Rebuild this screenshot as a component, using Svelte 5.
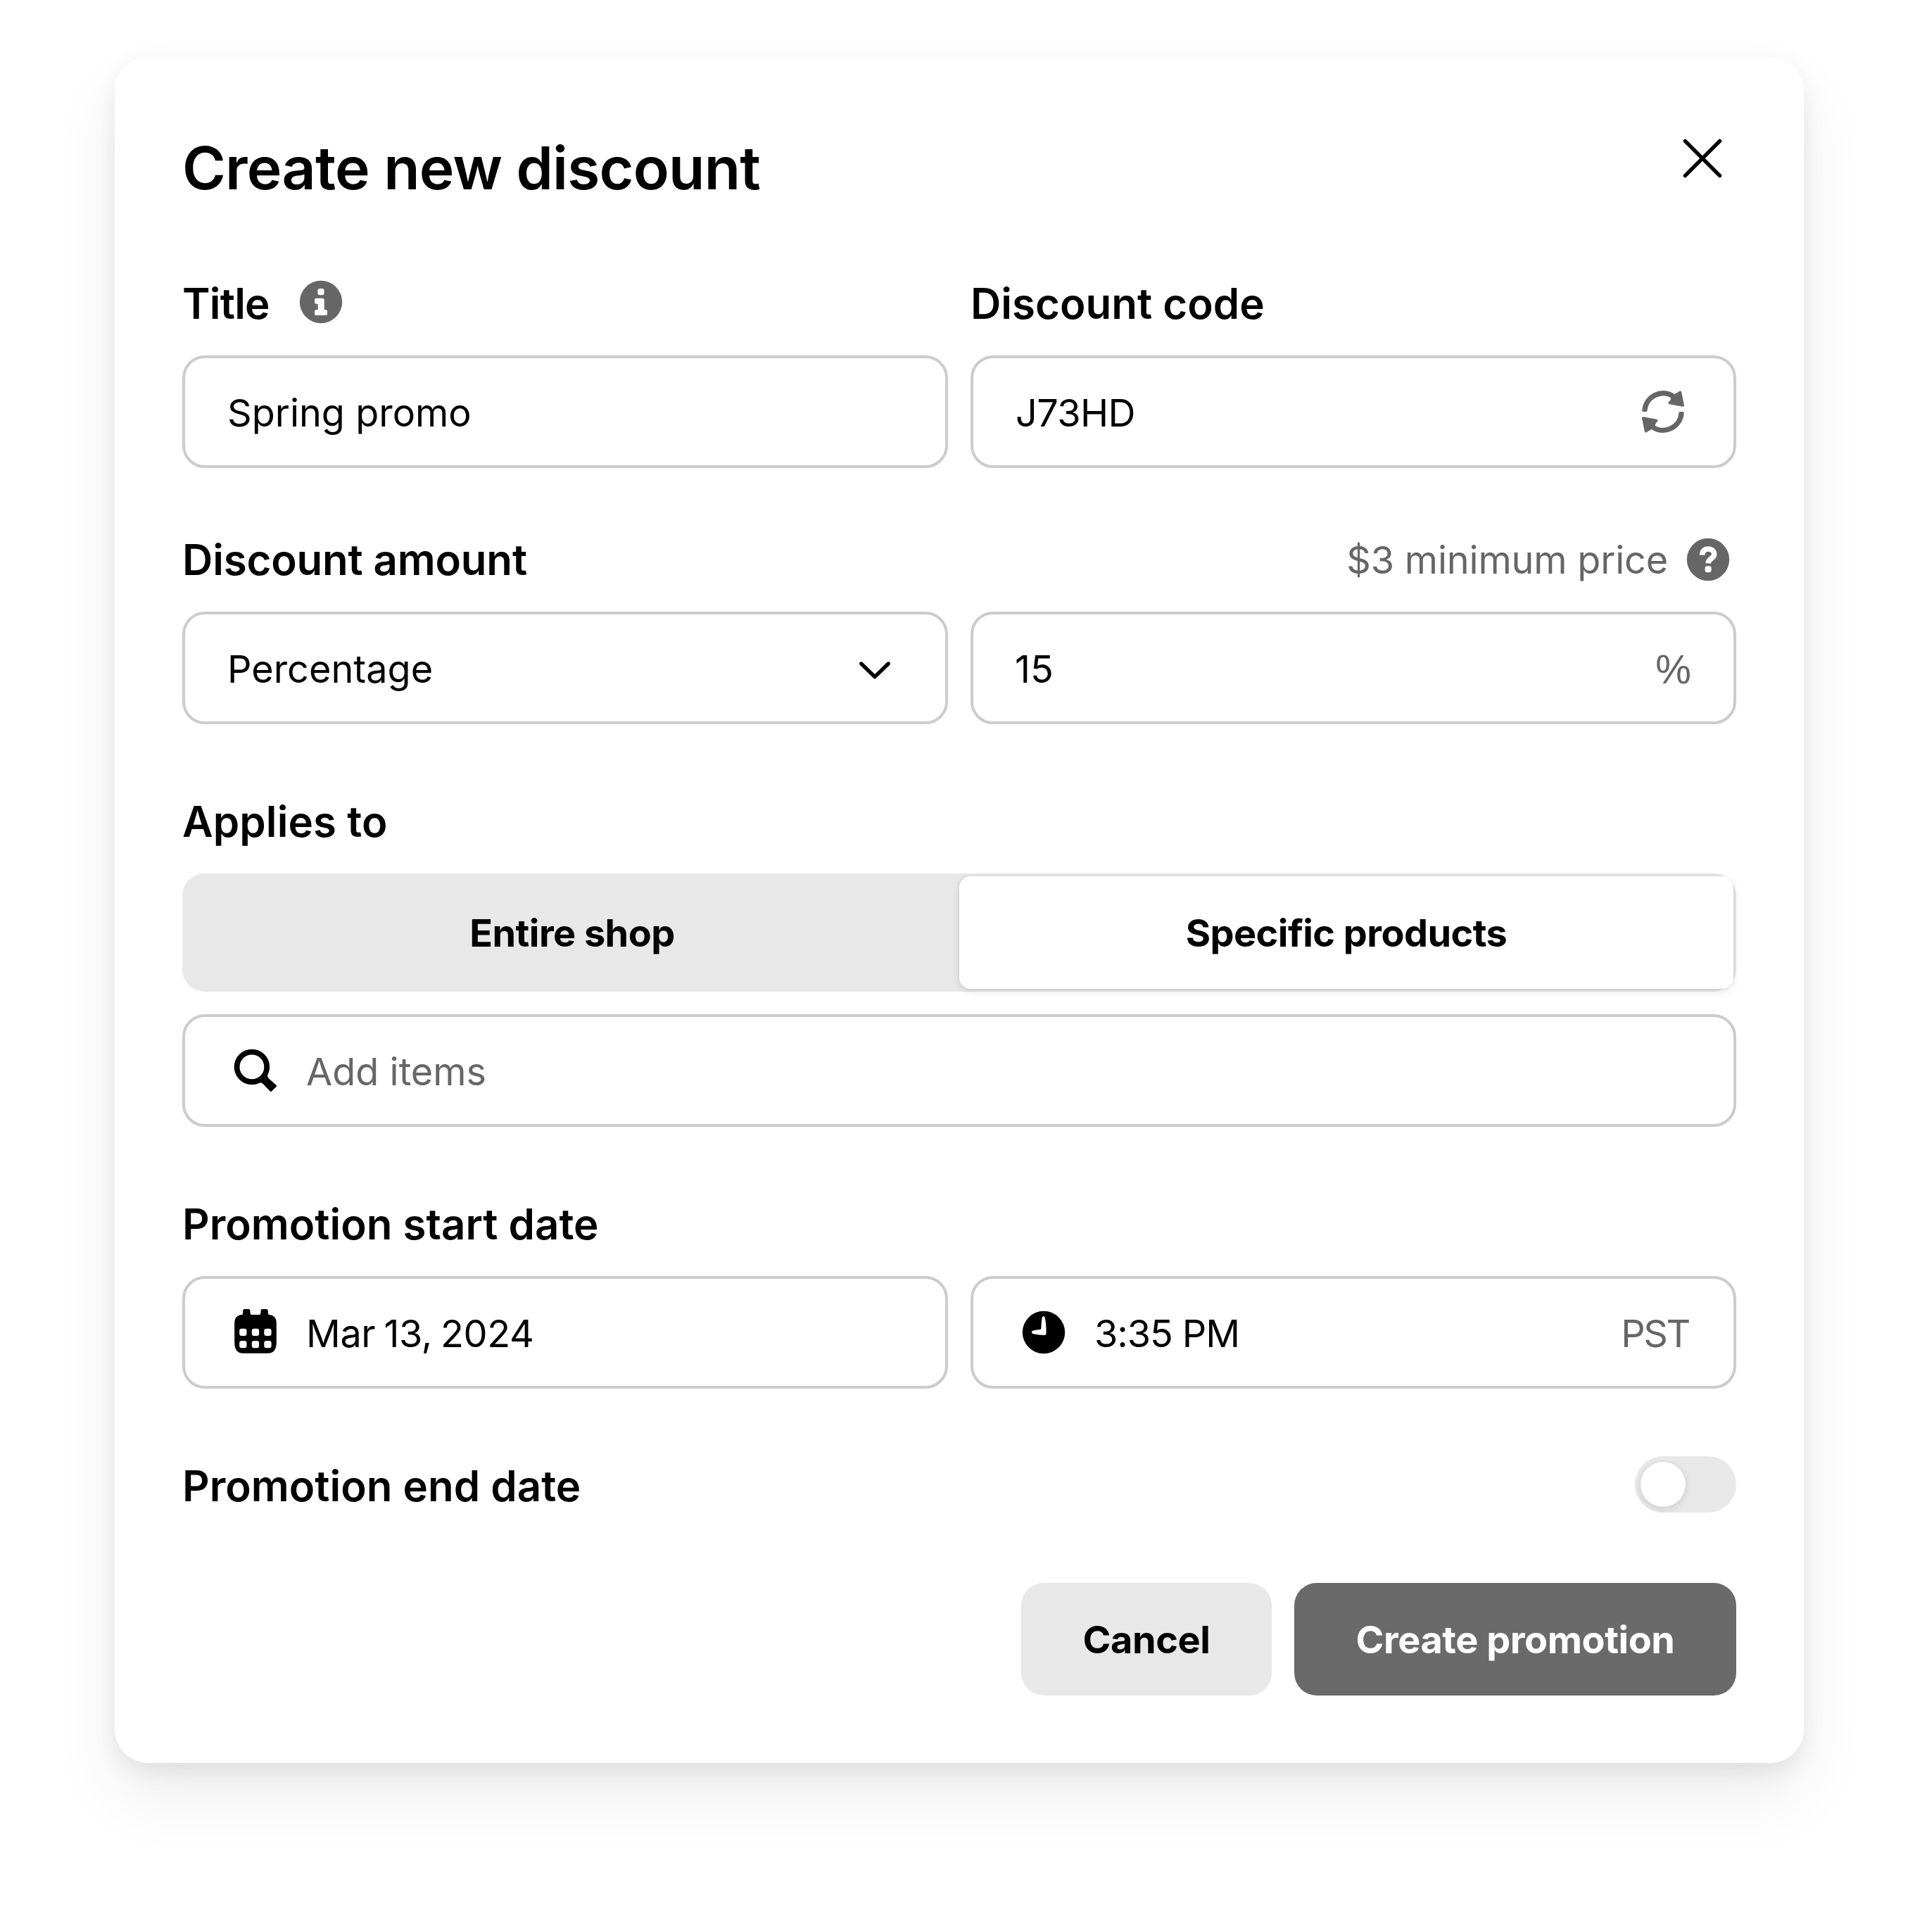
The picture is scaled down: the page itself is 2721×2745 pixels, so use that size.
<script>
  let scope = $state('specific');
  let endDate = $state(false);
</script>

<main class="dialog">
  <header class="head">
    <h1>Create new discount</h1>
    <button class="icon-btn close" aria-label="Close">
      <svg viewBox="0 0 96 96" fill="none" stroke="#000" stroke-width="5.4" stroke-linecap="round">
        <path d="M23.4 23.4 72.6 72.6M72.6 23.4 23.4 72.6" />
      </svg>
    </button>
  </header>

  <section class="row first">
    <div class="col">
      <div class="label">
        <h2 class="ls-title">Title</h2>
        <svg class="icon info" viewBox="0 0 80 80">
          <circle cx="40" cy="40" r="30.2" fill="#666" />
          <rect x="35.4" y="21" width="9.2" height="9.2" rx="3" fill="#fff" />
          <path fill="#fff" d="M33.5 34.7H42q2.7 0 2.7 2.7V51h1.8q2.5 0 2.5 2.5v3q0 2.5-2.5 2.5h-13q-2.5 0-2.5-2.5v-3q0-2.5 2.5-2.5h2.2v-8.3h-2.2q-2.5 0-2.5-2.5v-3q0-2.5 2.5-2.5z" />
        </svg>
      </div>
      <div class="field"><span>Spring promo</span></div>
    </div>
    <div class="col">
      <div class="label"><h2>Discount code</h2></div>
      <div class="field">
        <span class="code">J73HD</span>
        <button class="icon-btn end" aria-label="Generate a new code">
          <svg class="icon" viewBox="0 0 80 80">
            <g id="refresh-half">
              <path d="M13.9 38A26.3 26.3 0 0 1 54.5 18" fill="none" stroke="#666" stroke-width="7.3" />
              <path d="M10.2 37.2h7.4V38q-.2 2-2.2 2h-3q-2.2 0-2.2-2zM53 15.5l3.6-.6 6.9-4.2q2.4-.9 2.8 1.7L70 31q.2 2.1-2.2 1.7L49 29.3q-2.7-1.2-.9-3.2Q51.5 23 51 20.5z" fill="#666" />
            </g>
            <use href="#refresh-half" transform="rotate(180 40 40)" />
          </svg>
        </button>
      </div>
    </div>
  </section>

  <section>
    <div class="label">
      <h2 class="ls-tight">Discount amount</h2>
      <p class="hint">$3 minimum price</p>
      <svg class="icon help" viewBox="0 0 80 80">
        <circle cx="40" cy="40" r="30.2" fill="#666" />
        <path d="M31.6 33.6C31.8 28 35 25 40 25c5.3 0 8.7 3 8.7 7.5 0 6.5-8.2 5.2-8.5 13" fill="none" stroke="#fff" stroke-width="7.6" />
        <rect x="35.6" y="49.2" width="9" height="9" rx="3" fill="#fff" />
      </svg>
    </div>
    <div class="row">
      <div class="field">
        <span>Percentage</span>
        <svg class="icon end chevron" viewBox="0 0 80 80" fill="none" stroke="#000" stroke-width="5.4" stroke-linecap="round" stroke-linejoin="round">
          <path d="M20.8 34 40 52.6 59.2 34" />
        </svg>
      </div>
      <div class="field">
        <span class="amount">15</span>
        <span class="unit percent">%</span>
      </div>
    </div>
  </section>

  <section class="wide">
    <div class="label"><h2 class="ls-applies">Applies to</h2></div>
    <div class="segment">
      <button class:active={scope === 'shop'} onclick={() => (scope = 'shop')}>Entire shop</button>
      <button class:active={scope === 'specific'} onclick={() => (scope = 'specific')}>Specific products</button>
    </div>
    <div class="field search">
      <svg class="icon" viewBox="0 0 80 80">
        <circle cx="34.9" cy="34.9" r="21.3" fill="none" stroke="#000" stroke-width="7.8" />
        <path d="M57 46.5Q57 49.5 58.8 51.3L69.5 60.8Q70.6 61.9 69.6 63L63 69.6Q61.9 70.6 60.8 69.5L50.5 58.8Q48.8 57 46 57.3Z" />
      </svg>
      <span class="placeholder">Add items</span>
    </div>
  </section>

  <section class="wide">
    <div class="label"><h2>Promotion start date</h2></div>
    <div class="row">
      <div class="field">
        <svg class="icon" viewBox="0 0 80 80">
          <path d="M21.2 15q1-1 1-3V9.500q0-2.500 2.500-2.500H30q2.500 0 2.500 2.500V12q0 3 2.500 3h10q2.500 0 2.500-3V9.500Q47.500 7 50 7h5.300q2.500 0 2.500 2.500V12q0 2 1 3 11 .5 11 12v26.700q0 16-12 16H22.200q-12 0-12-16V27q0-11.500 11-12z" />
          {#each [34.7, 52] as y}
            {#each [17.2, 34.8, 52.3] as x}
              <rect {x} {y} width="10.3" height="10.3" rx="3.2" fill="#fff" />
            {/each}
          {/each}
        </svg>
        <span class="date">Mar 13, 2024</span>
      </div>
      <div class="field">
        <svg class="icon" viewBox="0 0 80 80">
          <circle cx="40" cy="40" r="30.2" />
          <path fill="#fff" d="M37.8 18.500q2-3 3.800 0Q43.600 27 43.600 41q0 3-2.600 3-8 0-16-1.700-4.500-2.500 0-4.700 5-1.300 9.600-1.600 1.800-.2 1.800-2 0-8 1.400-15.500z" />
        </svg>
        <span class="time">3:35 PM</span>
        <span class="unit pst">PST</span>
      </div>
    </div>
  </section>

  <section class="wide end-date">
    <h2>Promotion end date</h2>
    <button class="toggle" class:on={endDate} role="switch" aria-checked={endDate} aria-label="Promotion end date" onclick={() => (endDate = !endDate)}>
      <span class="knob"></span>
    </button>
  </section>

  <footer>
    <button class="btn cancel">Cancel</button>
    <button class="btn primary">Create promotion</button>
  </footer>
</main>

<style>
  :global(body) {
    background: #fff;
  }
  :global(#app) {
    display: flow-root;
    min-height: 2745px;
  }
  .dialog {
    box-sizing: border-box;
    width: 2400px;
    height: 2424px;
    margin: 81px 0 0 163px;
    padding: 96px;
    border-radius: 48px;
    background: #fff;
    box-shadow:
      0 12px 32px rgba(0, 0, 0, 0.08),
      0 48px 96px rgba(0, 0, 0, 0.07);
    font: 400 54px/80px Inter, 'Liberation Sans', sans-serif;
    color: #000;
  }
  h1, h2, p {
    margin: 0;
  }
  h1 {
    padding-top: 2px;
    font-size: 84px;
    line-height: 120px;
    font-weight: 600;
    letter-spacing: -0.8px;
  }
  h2 {
    font-size: 60px;
    line-height: 84px;
    font-weight: 600;
    letter-spacing: 0;
  }
  .ls-title { letter-spacing: -0.8px; }
  .ls-tight { letter-spacing: -0.2px; }
  .ls-applies { letter-spacing: 0.1px; }
  button {
    border: 0;
    padding: 0;
    margin: 0;
    background: none;
    font: inherit;
    color: inherit;
  }
  svg {
    display: block;
  }
  .head {
    display: flex;
    justify-content: space-between;
    align-items: flex-start;
    height: 120px;
  }
  .close svg {
    width: 96px;
    height: 96px;
  }
  .row {
    display: grid;
    grid-template-columns: 1fr 1fr;
    gap: 32px;
  }
  section {
    margin-top: 88px;
  }
  section.first {
    margin-top: 92px;
  }
  section.wide {
    margin-top: 96px;
  }
  .label {
    display: flex;
    align-items: center;
    height: 84px;
    margin-bottom: 32px;
  }
  .icon {
    width: 80px;
    height: 80px;
    flex: none;
  }
  .info {
    margin: -4px 0 0 33px;
  }
  .hint {
    margin-left: auto;
    margin-top: 2px;
    color: #666;
    letter-spacing: -0.2px;
  }
  .help {
    margin-left: 17px;
    margin-top: -1px;
  }
  .field {
    box-sizing: border-box;
    display: flex;
    align-items: center;
    height: 160px;
    padding: 0 60px;
    border: 4px solid #ccc;
    border-radius: 32px;
    background: #fff;
  }
  .field span {
    padding-top: 3px;
  }
  .field .icon + span {
    margin-left: 32px;
  }
  .end {
    margin-left: auto;
  }
  .code { letter-spacing: -0.6px; }
  .amount { margin-left: -1px; }
  .unit, .placeholder {
    color: #666;
  }
  .unit {
    margin-left: auto;
  }
  .percent {
    font-family: 'Liberation Sans', sans-serif;
    font-size: 57px;
  }
  .pst {
    margin-right: 3px;
    letter-spacing: -2.4px;
  }
  .date { letter-spacing: -0.4px; word-spacing: -2.6px; }
  .time { letter-spacing: -1.1px; }
  .segment {
    box-sizing: border-box;
    display: grid;
    grid-template-columns: 1fr 1fr;
    height: 168px;
    padding: 4px;
    border-radius: 32px;
    background: #e8e8e8;
  }
  .segment button {
    padding-top: 2px;
    border-radius: 16px;
    font-weight: 700;
    letter-spacing: -0.55px;
  }
  .segment .active {
    background: #fff;
    box-shadow: 0 4px 12px rgba(0, 0, 0, 0.1), 0 0 4px rgba(0, 0, 0, 0.08);
  }
  .search {
    margin-top: 32px;
  }
  .end-date {
    display: flex;
    justify-content: space-between;
    align-items: flex-start;
    height: 84px;
  }
  .toggle {
    box-sizing: border-box;
    width: 144px;
    height: 80px;
    padding: 8px;
    border-radius: 40px;
    background: #e8e8e8;
  }
  .toggle.on {
    background: #000;
  }
  .knob {
    display: block;
    width: 64px;
    height: 64px;
    border-radius: 50%;
    background: #fff;
    box-shadow: 0 4px 12px rgba(0, 0, 0, 0.1), 0 0 4px rgba(0, 0, 0, 0.06);
  }
  .toggle.on .knob {
    margin-left: auto;
  }
  footer {
    display: flex;
    justify-content: flex-end;
    gap: 32px;
    margin-top: 96px;
  }
  .btn {
    height: 160px;
    padding-top: 2px;
    border-radius: 32px;
    font-weight: 700;
    letter-spacing: -0.45px;
  }
  .cancel {
    width: 356px;
    background: #e8e8e8;
  }
  .primary {
    width: 628px;
    background: #6a6a6a;
    color: #fff;
  }
</style>
